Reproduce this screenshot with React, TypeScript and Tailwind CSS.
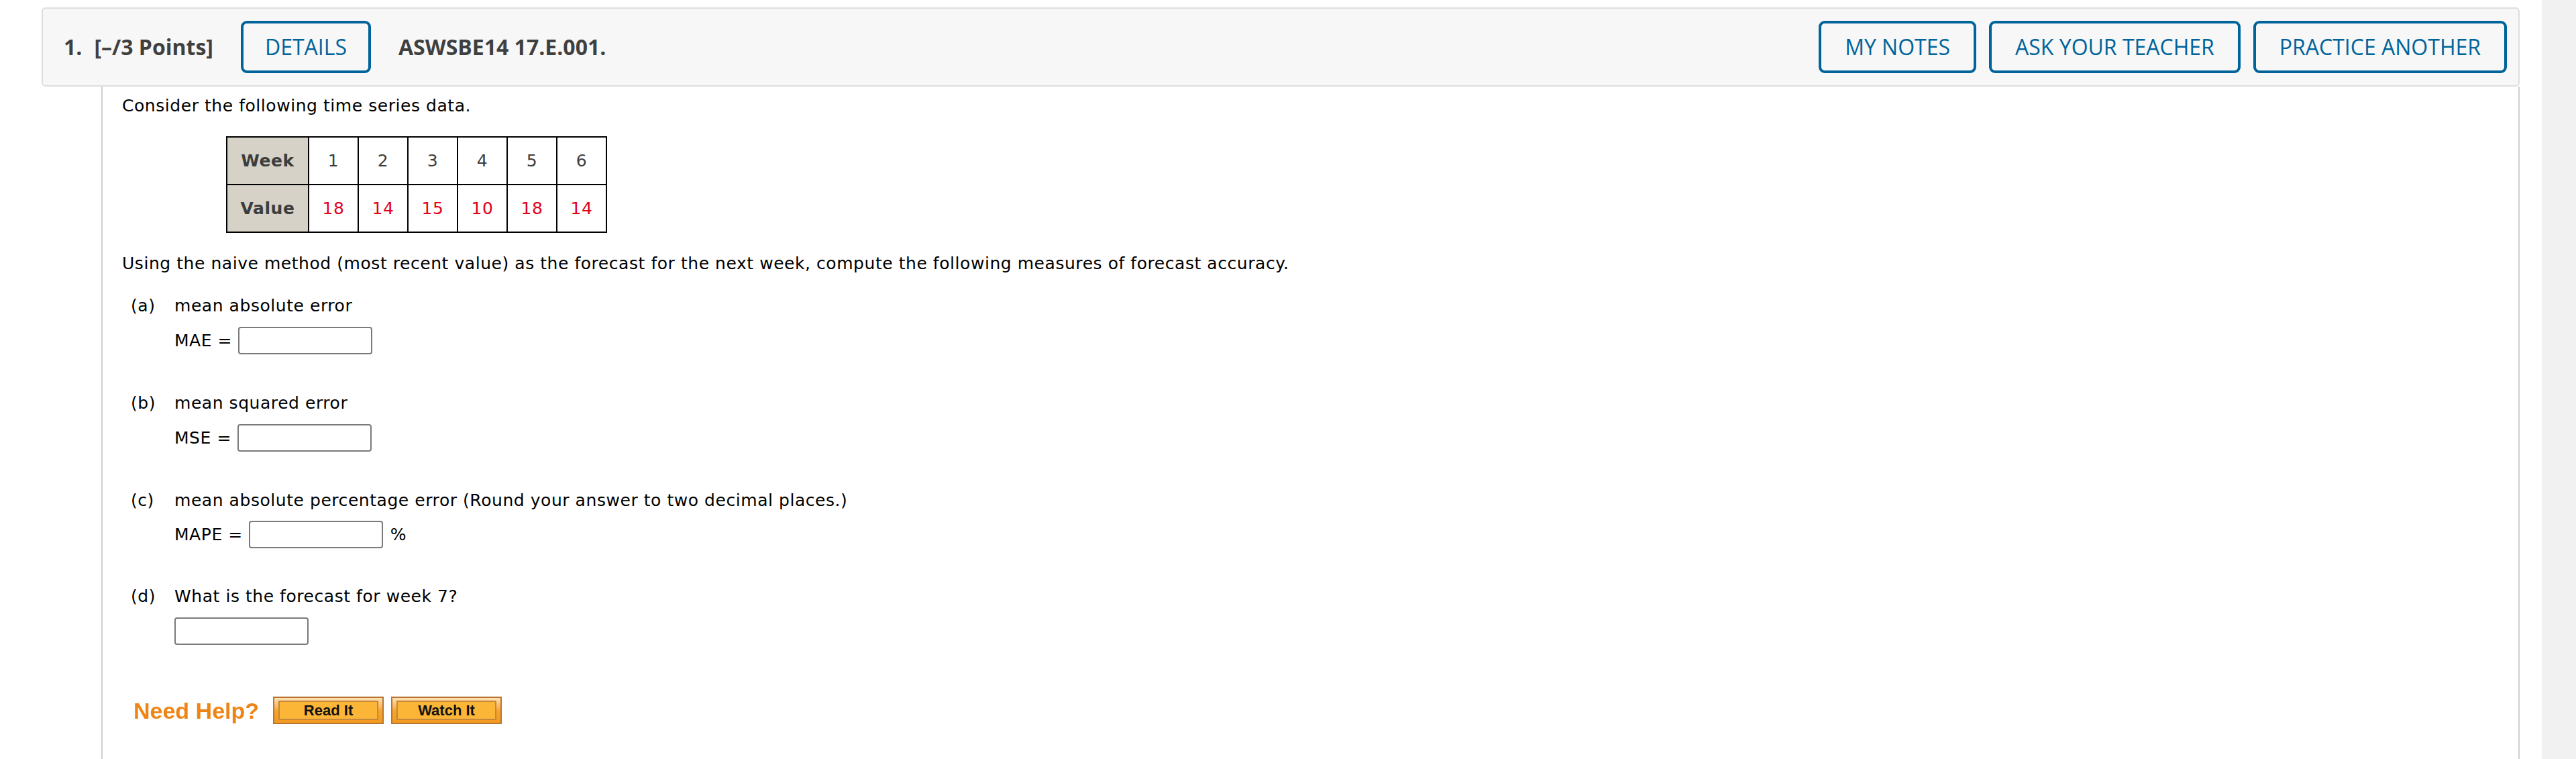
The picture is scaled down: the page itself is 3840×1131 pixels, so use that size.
import React from "react";

function HelpButton({ label }: { label: string }) {
  return (
    <div className="w-[165px] h-[41px] border-2 border-[#b8752f] bg-linear-to-b from-[#fde2b5] via-[#f8a62c] to-[#f39a1f] px-[6px] py-[4px] flex">
      <div className="flex-1 border-2 border-[#c4873c] bg-[#fbb537] flex items-center justify-center font-['Liberation_Sans',Arial,sans-serif] font-bold text-[22px] leading-none tracking-normal text-[#111]">
        {label}
      </div>
    </div>
  );
}

function Answer({ w = "w-[200px]" }: { w?: string }) {
  return <div className={`${w} h-[41px] border-2 border-[#7a7a7a] rounded-[4px] bg-white`} />;
}

function HeaderButton({ label }: { label: string }) {
  return (
    <div className="h-[78px] px-[35px] border-[4px] border-[#00649b] rounded-[9px] flex items-center text-[32px] text-[#00649b] font-normal">
      {label}
    </div>
  );
}

export default function App() {
  const weeks = ["1", "2", "3", "4", "5", "6"];
  const values = ["18", "14", "15", "10", "18", "14"];
  return (
    <div className="w-full h-[1131px] bg-white flex overflow-hidden">
      <div className="flex-1 flex flex-col pl-[62px] pt-[11px] pr-[33px]">
        {/* Header */}
        <div className="h-[118px] shrink-0 border-2 border-[#dedede] bg-[#f7f7f7] rounded-[6px] flex items-center pl-[31px] pr-[17px] font-['Open_Sans',sans-serif] text-[#3f3f3f]">
          <span className="text-[32px] font-bold">1.</span>
          <span className="text-[32px] font-bold ml-[18px]">[–/3 Points]</span>
          <div className="ml-[41px]">
            <div className="h-[78px] px-[32px] border-[4px] border-[#00649b] rounded-[9px] flex items-center text-[32px] text-[#00649b] font-normal">
              DETAILS
            </div>
          </div>
          <span className="text-[32px] font-bold ml-[41px]">ASWSBE14 17.E.001.</span>
          <div className="ml-auto flex gap-[19px]">
            <HeaderButton label="MY NOTES" />
            <HeaderButton label="ASK YOUR TEACHER" />
            <HeaderButton label="PRACTICE ANOTHER" />
          </div>
        </div>

        {/* Content */}
        <div className="flex-1 ml-[89px] border-l-2 border-r-2 border-[#cfcfcf] pl-[29px] pt-[14px] font-['DejaVu_Sans',Verdana,sans-serif] text-[25px] leading-[30px] tracking-[0.55px] text-black">
          <div>Consider the following time series data.</div>

          <div className="mt-[30px] ml-[155px] w-fit grid grid-cols-[120px_repeat(6,72px)] grid-rows-[69px_69px] gap-[2px] p-[2px] bg-black">
            <div className="bg-[#d6d2c8] flex items-center justify-center font-bold text-[#3d3d3d]">Week</div>
            {weeks.map((w) => (
              <div key={"w" + w} className="bg-white flex items-center justify-center text-[#3d3d3d]">
                {w}
              </div>
            ))}
            <div className="bg-[#d6d2c8] flex items-center justify-center font-bold text-[#3d3d3d]">Value</div>
            {values.map((v, i) => (
              <div key={"v" + i} className="bg-white flex items-center justify-center text-[#e0001a]">
                {v}
              </div>
            ))}
          </div>

          <div className="mt-[31px]">
            Using the naive method (most recent value) as the forecast for the next week, compute the following measures of forecast accuracy.
          </div>

          {/* (a) */}
          <div className="mt-[33px] flex">
            <span className="ml-[13px] w-[65px]">(a)</span>
            <span>mean absolute error</span>
          </div>
          <div className="mt-[16px] ml-[78px] flex items-center h-[41px]">
            <span>MAE =</span>
            <div className="ml-[9px]">
              <Answer />
            </div>
          </div>

          {/* (b) */}
          <div className="mt-[58px] flex">
            <span className="ml-[13px] w-[65px]">(b)</span>
            <span>mean squared error</span>
          </div>
          <div className="mt-[16px] ml-[78px] flex items-center h-[41px]">
            <span>MSE =</span>
            <div className="ml-[9px]">
              <Answer />
            </div>
          </div>

          {/* (c) */}
          <div className="mt-[58px] flex">
            <span className="ml-[13px] w-[65px]">(c)</span>
            <span>mean absolute percentage error (Round your answer to two decimal places.)</span>
          </div>
          <div className="mt-[15px] ml-[78px] flex items-center h-[41px]">
            <span>MAPE =</span>
            <div className="ml-[9px]">
              <Answer />
            </div>
            <span className="ml-[11px]">%</span>
          </div>

          {/* (d) */}
          <div className="mt-[57px] flex">
            <span className="ml-[13px] w-[65px]">(d)</span>
            <span>What is the forecast for week 7?</span>
          </div>
          <div className="mt-[16px] ml-[78px] flex items-center h-[41px]">
            <Answer />
          </div>

          {/* Need help */}
          <div className="mt-[77px] ml-[17px] flex items-center h-[41px]">
            <span className="font-['Liberation_Sans',Arial,sans-serif] font-bold text-[34px] leading-none tracking-normal text-[#ee8414] blur-[0.4px]">
              Need Help?
            </span>
            <div className="ml-[21px] flex gap-[11px]">
              <HelpButton label="Read It" />
              <HelpButton label="Watch It" />
            </div>
          </div>
        </div>
      </div>
      <div className="w-[51px] shrink-0 bg-[#f1f1f1]" />
    </div>
  );
}
